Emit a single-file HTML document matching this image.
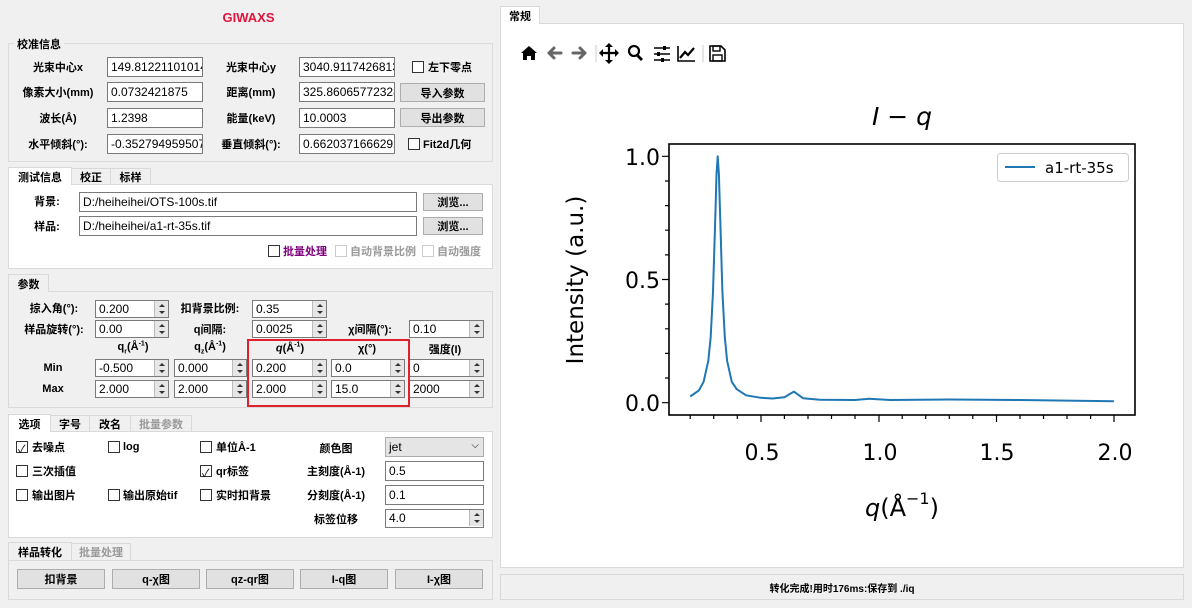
<!DOCTYPE html>
<html><head><meta charset="utf-8">
<style>
*{box-sizing:border-box;margin:0;padding:0}
body{width:1192px;height:608px;background:#f0f0f0;position:relative;overflow:hidden;font-family:"Liberation Sans","Noto Sans CJK SC",sans-serif;font-size:11px;color:#000}
.a{position:absolute}
.l{position:absolute;font-weight:bold;font-size:11px;white-space:nowrap;transform:translate(-50%,-50%)}
.in{position:absolute;background:#fff;border:1px solid #7a7a7a;height:20px;padding:2px 3px;font-size:12px;white-space:nowrap;overflow:hidden;line-height:14px}
.sp{position:absolute;background:#fff;border:1px solid #7a7a7a;height:18px;padding:1px 3px;font-size:12px;line-height:14px}
.sp:after{content:"";position:absolute;right:0;top:0;width:13px;height:16px;background:#e6e6e6;border-left:1px solid #bbb}
.sp i{position:absolute;right:3px;width:0;height:0;border-left:3px solid transparent;border-right:3px solid transparent;z-index:2}
.sp i.u{top:3px;border-bottom:3px solid #333}
.sp i.d{top:10px;border-top:3px solid #333}
.btn{position:absolute;background:#e1e1e1;border:1px solid #adadad;font-weight:bold;font-size:11px;display:flex;align-items:center;justify-content:center}
.grp{position:absolute;border:1px solid #dcdcdc}
.tab{position:absolute;height:17px;border:1px solid #d9d9d9;border-bottom:none;font-weight:bold;font-size:11px;display:flex;align-items:center;justify-content:center;background:#f0f0f0}
.tab.s{background:#fff;height:18px;z-index:2}
.cb{position:absolute;width:12px;height:12px;border:1px solid #333;background:#fff}
.cb.g{border-color:#ccc}
.ck{position:absolute;font-weight:bold;font-size:11px;white-space:nowrap;transform:translateY(-50%)}
</style></head><body>

<div class="a" style="left:0;top:10px;width:497px;text-align:center;color:#e0143c;font-weight:bold;font-size:13px">GIWAXS</div>

<div class="grp" style="left:8px;top:43px;width:485px;height:119px"></div>
<div class="a" style="left:14px;top:36px;background:#f0f0f0;padding:0 3px;font-weight:bold;font-size:11px">校准信息</div>
<div class="l" style="left:58px;top:67px">光束中心x</div>
<div class="l" style="left:58px;top:92px">像素大小(mm)</div>
<div class="l" style="left:58px;top:118px">波长(Å)</div>
<div class="l" style="left:58px;top:144px">水平倾斜(°):</div>
<div class="in" style="left:107px;top:57px;width:96px">149.8122110101453</div>
<div class="in" style="left:107px;top:82px;width:96px">0.0732421875</div>
<div class="in" style="left:107px;top:108px;width:96px">1.2398</div>
<div class="in" style="left:107px;top:134px;width:96px">-0.35279495950739</div>
<div class="l" style="left:251px;top:67px">光束中心y</div>
<div class="l" style="left:251px;top:92px">距离(mm)</div>
<div class="l" style="left:251px;top:118px">能量(keV)</div>
<div class="l" style="left:251px;top:144px">垂直倾斜(°):</div>
<div class="in" style="left:299px;top:57px;width:96px">3040.911742681327</div>
<div class="in" style="left:299px;top:82px;width:96px">325.8606577232806</div>
<div class="in" style="left:299px;top:108px;width:96px">10.0003</div>
<div class="in" style="left:299px;top:134px;width:96px">0.662037166629210</div>
<div class="cb" style="left:412px;top:61px"></div><div class="ck" style="left:428px;top:67px">左下零点</div>
<div class="btn" style="left:400px;top:83px;width:85px;height:19px">导入参数</div>
<div class="btn" style="left:400px;top:108px;width:85px;height:19px">导出参数</div>
<div class="cb" style="left:408px;top:138px"></div><div class="ck" style="left:423px;top:144px">Fit2d几何</div>

<div class="tab s" style="left:8px;top:167px;width:64px">测试信息</div>
<div class="tab" style="left:71px;top:168px;width:40px">校正</div>
<div class="tab" style="left:110px;top:168px;width:41px">标样</div>
<div class="a" style="left:8px;top:184px;width:485px;height:85px;background:#fff;border:1px solid #d9d9d9"></div>
<div class="l" style="left:47px;top:201px">背景:</div>
<div class="l" style="left:47px;top:226px">样品:</div>
<div class="in" style="left:79px;top:192px;width:338px">D:/heiheihei/OTS-100s.tif</div>
<div class="in" style="left:79px;top:216px;width:338px">D:/heiheihei/a1-rt-35s.tif</div>
<div class="btn" style="left:423px;top:193px;width:60px;height:18px">浏览...</div>
<div class="btn" style="left:423px;top:217px;width:60px;height:18px">浏览...</div>
<div class="cb" style="left:268px;top:245px"></div><div class="ck" style="left:283px;top:251px;color:#800080">批量处理</div>
<div class="cb g" style="left:335px;top:245px"></div><div class="ck" style="left:350px;top:251px;color:#999">自动背景比例</div>
<div class="cb g" style="left:422px;top:245px"></div><div class="ck" style="left:437px;top:251px;color:#999">自动强度</div>

<div class="tab s" style="left:8px;top:274px;width:41px;background:#f0f0f0">参数</div>
<div class="a" style="left:8px;top:291px;width:485px;height:117px;border:1px solid #d9d9d9"></div>
<div class="l" style="left:54px;top:308px">掠入角(°):</div>
<div class="l" style="left:54px;top:329px">样品旋转(°):</div>
<div class="l" style="left:210px;top:308px">扣背景比例:</div>
<div class="l" style="left:210px;top:329px">q间隔:</div>
<div class="l" style="left:370px;top:329px">χ间隔(°):</div>
<div class="sp" style="left:95px;top:300px;width:74px">0.200<i class="u"></i><i class="d"></i></div>
<div class="sp" style="left:252px;top:300px;width:75px">0.35<i class="u"></i><i class="d"></i></div>
<div class="sp" style="left:95px;top:320px;width:74px">0.00<i class="u"></i><i class="d"></i></div>
<div class="sp" style="left:252px;top:320px;width:75px">0.0025<i class="u"></i><i class="d"></i></div>
<div class="sp" style="left:409px;top:320px;width:75px">0.10<i class="u"></i><i class="d"></i></div>
<div class="l" style="left:133px;top:348px">q<sub style="font-size:7px">r</sub>(Å<sup style="font-size:7px">-1</sup>)</div>
<div class="l" style="left:210px;top:348px">q<sub style="font-size:7px">z</sub>(Å<sup style="font-size:7px">-1</sup>)</div>
<div class="l" style="left:290px;top:348px"><i>q</i>(Å<sup style="font-size:7px">-1</sup>)</div>
<div class="l" style="left:367px;top:349px">χ(°)</div>
<div class="l" style="left:445px;top:349px">强度(I)</div>
<div class="l" style="left:53px;top:368px">Min</div>
<div class="l" style="left:53px;top:389px">Max</div>
<div class="sp" style="left:95px;top:359px;width:74px">-0.500<i class="u"></i><i class="d"></i></div>
<div class="sp" style="left:174px;top:359px;width:73px">0.000<i class="u"></i><i class="d"></i></div>
<div class="sp" style="left:252px;top:359px;width:75px">0.200<i class="u"></i><i class="d"></i></div>
<div class="sp" style="left:331px;top:359px;width:74px">0.0<i class="u"></i><i class="d"></i></div>
<div class="sp" style="left:409px;top:359px;width:75px">0<i class="u"></i><i class="d"></i></div>
<div class="sp" style="left:95px;top:380px;width:74px">2.000<i class="u"></i><i class="d"></i></div>
<div class="sp" style="left:174px;top:380px;width:73px">2.000<i class="u"></i><i class="d"></i></div>
<div class="sp" style="left:252px;top:380px;width:75px">2.000<i class="u"></i><i class="d"></i></div>
<div class="sp" style="left:331px;top:380px;width:74px">15.0<i class="u"></i><i class="d"></i></div>
<div class="sp" style="left:409px;top:380px;width:75px">2000<i class="u"></i><i class="d"></i></div>
<div class="a" style="left:247px;top:339px;width:163px;height:68px;border:2px solid #e0202a"></div>

<div class="tab s" style="left:8px;top:414px;width:43px">选项</div>
<div class="tab" style="left:50px;top:415px;width:40px">字号</div>
<div class="tab" style="left:89px;top:415px;width:42px">改名</div>
<div class="tab" style="left:130px;top:415px;width:62px;color:#999">批量参数</div>
<div class="a" style="left:8px;top:431px;width:485px;height:107px;background:#fff;border:1px solid #d9d9d9"></div>
<div class="cb" style="left:16px;top:441px"></div><div class="ck" style="left:32px;top:447px">去噪点</div>
<div class="a" style="left:18px;top:441px;font-size:11px">✓</div>
<div class="cb" style="left:108px;top:441px"></div><div class="ck" style="left:123px;top:447px">log</div>
<div class="cb" style="left:200px;top:441px"></div><div class="ck" style="left:216px;top:447px">单位Å-1</div>
<div class="cb" style="left:16px;top:465px"></div><div class="ck" style="left:32px;top:471px">三次插值</div>
<div class="cb" style="left:200px;top:465px"></div><div class="a" style="left:202px;top:465px;font-size:11px">✓</div><div class="ck" style="left:216px;top:471px">qr标签</div>
<div class="cb" style="left:16px;top:489px"></div><div class="ck" style="left:32px;top:495px">输出图片</div>
<div class="cb" style="left:108px;top:489px"></div><div class="ck" style="left:123px;top:495px">输出原始tif</div>
<div class="cb" style="left:200px;top:489px"></div><div class="ck" style="left:216px;top:495px">实时扣背景</div>
<div class="l" style="left:336px;top:448px">颜色图</div>
<div class="l" style="left:336px;top:471px">主刻度(Å-1)</div>
<div class="l" style="left:336px;top:495px">分刻度(Å-1)</div>
<div class="l" style="left:336px;top:519px">标签位移</div>
<div class="in" style="left:385px;top:437px;width:99px;background:#e5e5e5;border-color:#adadad">jet<span style="position:absolute;right:4px;top:1px;font-size:10px">⌵</span></div>
<div class="in" style="left:385px;top:461px;width:99px">0.5</div>
<div class="in" style="left:385px;top:485px;width:99px">0.1</div>
<div class="sp" style="left:385px;top:509px;width:99px;height:19px">4.0<i class="u"></i><i class="d"></i></div>

<div class="tab s" style="left:8px;top:542px;width:64px;background:#f0f0f0">样品转化</div>
<div class="tab" style="left:71px;top:543px;width:60px;color:#999">批量处理</div>
<div class="a" style="left:8px;top:560px;width:485px;height:40px;border:1px solid #d9d9d9"></div>
<div class="btn" style="left:17px;top:569px;width:88px;height:20px">扣背景</div>
<div class="btn" style="left:112px;top:569px;width:88px;height:20px">q-χ图</div>
<div class="btn" style="left:206px;top:569px;width:88px;height:20px">qz-qr图</div>
<div class="btn" style="left:300px;top:569px;width:88px;height:20px">I-q图</div>
<div class="btn" style="left:395px;top:569px;width:88px;height:20px">I-χ图</div>

<div class="tab s" style="left:500px;top:6px;width:40px">常规</div>
<div class="a" style="left:500px;top:23px;width:684px;height:545px;background:#fff;border:1px solid #d9d9d9"></div>
<div class="a" style="left:500px;top:574px;width:684px;height:26px;border:1px solid #d9d9d9;display:flex;align-items:center;justify-content:center;font-weight:bold;font-size:10px">转化完成!用时176ms:保存到 ./iq</div>

<svg class="a" style="left:0;top:0" width="1192" height="608" viewBox="0 0 1192 608">
<g fill="#000">
<path d="M521 53 L529 46 L537 53 L535 53 L535 60 L531 60 L531 56 L527 56 L527 60 L523 60 L523 53Z"/>
</g>
<g stroke="#666" stroke-width="3" fill="none" stroke-linecap="round" stroke-linejoin="round">
<path d="M561 53 H549 M554 48 L549 53 L554 58"/>
<path d="M573 53 H585 M580 48 L585 53 L580 58"/>
</g>
<line x1="596" y1="45" x2="596" y2="62" stroke="#ccc"/>
<g stroke="#000" stroke-width="2.2" fill="none">
<path d="M609 45 V62 M601 53 H617"/>
</g>
<g fill="#000"><path d="M609 43 L605 47 H613Z M609 64 L605 60 H613Z M599 53 L603 49 V57Z M619 53 L615 49 V57Z"/></g>
<circle cx="634" cy="51" r="5" stroke="#000" stroke-width="2.2" fill="none"/>
<line x1="637" y1="55" x2="642" y2="60" stroke="#000" stroke-width="2.8"/>
<g stroke="#000" stroke-width="1.6"><path d="M654 48 H670 M654 54 H670 M654 60 H670"/></g>
<g fill="#000"><rect x="663" y="46" width="3" height="4"/><rect x="657" y="52" width="3" height="4"/><rect x="661" y="58" width="3" height="4"/></g>
<path d="M678 46 V61 H695" stroke="#000" stroke-width="1.6" fill="none"/>
<path d="M680 58 L685 52 L688 55 L694 48" stroke="#000" stroke-width="2.2" fill="none"/>
<line x1="703" y1="45" x2="703" y2="62" stroke="#ccc"/>
<path d="M710 46 H721 L725 50 V61 H710Z" stroke="#000" stroke-width="1.6" fill="none"/>
<rect x="713" y="46" width="7" height="5" stroke="#000" stroke-width="1.4" fill="none"/>
<rect x="713" y="55" width="9" height="6" stroke="#000" stroke-width="1.4" fill="none"/>

<g font-family="DejaVu Sans, sans-serif" fill="#000">
<text x="902" y="125" font-size="25" text-anchor="middle" font-style="italic">I − q</text>
<text x="660" y="165" font-size="22" text-anchor="end">1.0</text>
<text x="660" y="288" font-size="22" text-anchor="end">0.5</text>
<text x="660" y="411" font-size="22" text-anchor="end">0.0</text>
<text x="762" y="460" font-size="22" text-anchor="middle">0.5</text>
<text x="880" y="460" font-size="22" text-anchor="middle">1.0</text>
<text x="997" y="460" font-size="22" text-anchor="middle">1.5</text>
<text x="1115" y="460" font-size="22" text-anchor="middle">2.0</text>
<text x="902" y="516" font-size="24" text-anchor="middle"><tspan font-style="italic">q</tspan>(Å<tspan font-size="16" dy="-12">−1</tspan><tspan dy="12">)</tspan></text>
<text transform="translate(583,280) rotate(-90)" font-size="23" text-anchor="middle">Intensity (a.u.)</text>
</g>
<rect x="669" y="144" width="466" height="271" fill="none" stroke="#000" stroke-width="1.6"/>
<g stroke="#000" stroke-width="1.2">
<path d="M662 402.7H669 M662 279.5H669 M662 156.3H669"/>
<path d="M665 378H669 M665 353.4H669 M665 328.8H669 M665 304.1H669 M665 254.9H669 M665 230.2H669 M665 205.6H669 M665 181H669"/>
<path d="M761 415V422 M879 415V422 M996.5 415V422 M1114 415V422"/>
<path d="M690.2 415V419 M713.7 415V419 M737.3 415V419 M784.4 415V419 M808 415V419 M831.5 415V419 M855 415V419 M902.2 415V419 M925.7 415V419 M949.3 415V419 M972.8 415V419 M1020 415V419 M1043.5 415V419 M1067 415V419 M1090.6 415V419"/>
</g>
<polyline fill="none" stroke="#1f77b4" stroke-width="2" stroke-linejoin="round" points="690.2,396.5 698.9,390.4 703.6,381.8 708.3,360.8 710.7,336.9 713,291.8 715.4,214.2 716.5,174 717.7,156.3 718.9,174 720.1,214.2 722.4,291.8 724.8,336.9 727.1,360.8 731.8,381.8 736.6,389.1 746,395.3 760.8,397.8 772.6,398.5 784.3,397.3 793.8,391.6 803.2,398.3 819.7,399.7 855,400 869.1,398.8 890.3,400 949.1,399.5 1019.7,400 1113.9,401.2"/>
<rect x="997.5" y="153.5" width="131" height="28" rx="3" fill="#fff" stroke="#ccc"/>
<line x1="1005" y1="167" x2="1035" y2="167" stroke="#1f77b4" stroke-width="2"/>
<text x="1045" y="173" font-family="DejaVu Sans, sans-serif" font-size="15">a1-rt-35s</text>
</svg>
</body></html>
